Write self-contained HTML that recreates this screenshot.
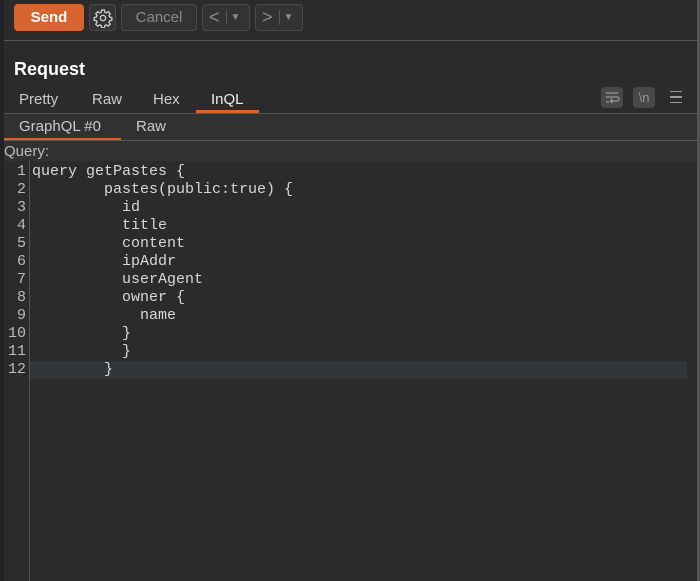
<!DOCTYPE html>
<html><head><style>
*{margin:0;padding:0;box-sizing:border-box}
body{width:700px;height:581px;background:#2b2b2b;font-family:"Liberation Sans",sans-serif;position:relative;overflow:hidden;color:#ddd}
.abs{position:absolute}
.btn{position:absolute;top:4px;height:27px;border:1px solid #4a4a4a;border-radius:4px;background:#333;color:#8a8a8a;font-size:15px;display:flex;align-items:center;justify-content:center}
.code{position:absolute;left:32px;top:163px;font-family:"Liberation Mono",monospace;font-size:15px;line-height:18px;color:#d8d8d8;white-space:pre;-webkit-text-stroke:0}
.nums{position:absolute;left:0;top:163px;width:26px;text-align:right;font-family:"Liberation Mono",monospace;font-size:15px;line-height:18px;color:#bbb;white-space:pre}
</style></head><body>
<div class="abs" style="left:0;top:0;width:4px;height:581px;background:#20232a"></div>
<div class="abs" style="left:697px;top:0;width:3px;height:581px;background:#555"></div>
<div class="btn" style="left:14px;width:70px;background:#d86430;border-color:#d86430;color:#fff;font-weight:bold">Send</div>
<div class="btn" style="left:89px;width:27px;color:#ccc">
<svg width="20" height="20" viewBox="0 0 24 24" fill="none" stroke="#ccc" stroke-width="1.6"><circle cx="12" cy="12" r="3.2"/><path d="M10.3 2.5h3.4l.5 2.6 1.9.8 2.2-1.5 2.4 2.4-1.5 2.2.8 1.9 2.6.5v3.4l-2.6.5-.8 1.9 1.5 2.2-2.4 2.4-2.2-1.5-1.9.8-.5 2.6h-3.4l-.5-2.6-1.9-.8-2.2 1.5-2.4-2.4 1.5-2.2-.8-1.9-2.6-.5v-3.4l2.6-.5.8-1.9-1.5-2.2 2.4-2.4 2.2 1.5 1.9-.8z"/></svg></div>
<div class="btn" style="left:121px;width:76px">Cancel</div>
<div class="btn" style="left:202px;width:48px;justify-content:flex-start;padding-left:6px;font-size:18px">&lt;<span style="border-left:1px solid #555;height:15px;margin:0 4px 0 6px"></span><span style="font-size:10px">▼</span></div>
<div class="btn" style="left:255px;width:48px;justify-content:flex-start;padding-left:6px;font-size:18px">&gt;<span style="border-left:1px solid #555;height:15px;margin:0 4px 0 6px"></span><span style="font-size:10px">▼</span></div>
<div class="abs" style="left:4px;top:40px;width:693px;height:1px;background:#555"></div>
<div class="abs" style="left:14px;top:59px;font-size:18px;font-weight:bold;color:#fff">Request</div>
<div class="abs" style="left:19px;top:91px;font-size:15px;color:#ccc">Pretty</div>
<div class="abs" style="left:92px;top:91px;font-size:15px;color:#ccc">Raw</div>
<div class="abs" style="left:153px;top:91px;font-size:15px;color:#ccc">Hex</div>
<div class="abs" style="left:211px;top:91px;font-size:15px;color:#eee">InQL</div>
<div class="abs" style="left:196px;top:110px;width:63px;height:3px;background:#d86430"></div>
<div class="abs" style="left:601px;top:87px;width:22px;height:21px;background:#484848;border-radius:4px">
<svg width="22" height="21" viewBox="0 0 22 21" fill="none" stroke="#999" stroke-width="1.3"><path d="M5 6h12M5 10h11a2 2 0 0 1 0 4h-6M11.5 12l-2 2 2 2M5 15h3"/></svg></div>
<div class="abs" style="left:633px;top:87px;width:22px;height:21px;background:#484848;border-radius:4px;color:#999;font-size:13px;text-align:center;line-height:21px">\n</div>
<div class="abs" style="left:670px;top:91px;width:12px;height:12px;border-top:1.5px solid #999;border-bottom:1.5px solid #999"><div style="margin-top:4px;height:1.5px;background:#999"></div></div>
<div class="abs" style="left:4px;top:113px;width:693px;height:1px;background:#555"></div>
<div class="abs" style="left:4px;top:114px;width:693px;height:26px;background:#313131"></div>
<div class="abs" style="left:19px;top:118px;font-size:15px;color:#ccc">GraphQL #0</div>
<div class="abs" style="left:136px;top:118px;font-size:15px;color:#ccc">Raw</div>
<div class="abs" style="left:4px;top:138px;width:117px;height:2px;background:#d86430"></div>
<div class="abs" style="left:4px;top:140px;width:693px;height:1px;background:#555"></div>
<div class="abs" style="left:4px;top:141px;width:693px;height:20px;background:#323232"></div>
<div class="abs" style="left:4px;top:143px;font-size:15px;color:#bbb">Query:</div>
<div class="abs" style="left:29px;top:161px;width:1px;height:420px;background:#555"></div>
<div class="abs" style="left:30px;top:361px;width:657px;height:18px;background:#32363a"></div>
<div class="nums">1
2
3
4
5
6
7
8
9
10
11
12</div>
<div class="code">query getPastes {
        pastes(public:true) {
          id
          title
          content
          ipAddr
          userAgent
          owner {
            name
          }
          }
        }</div>
</body></html>
